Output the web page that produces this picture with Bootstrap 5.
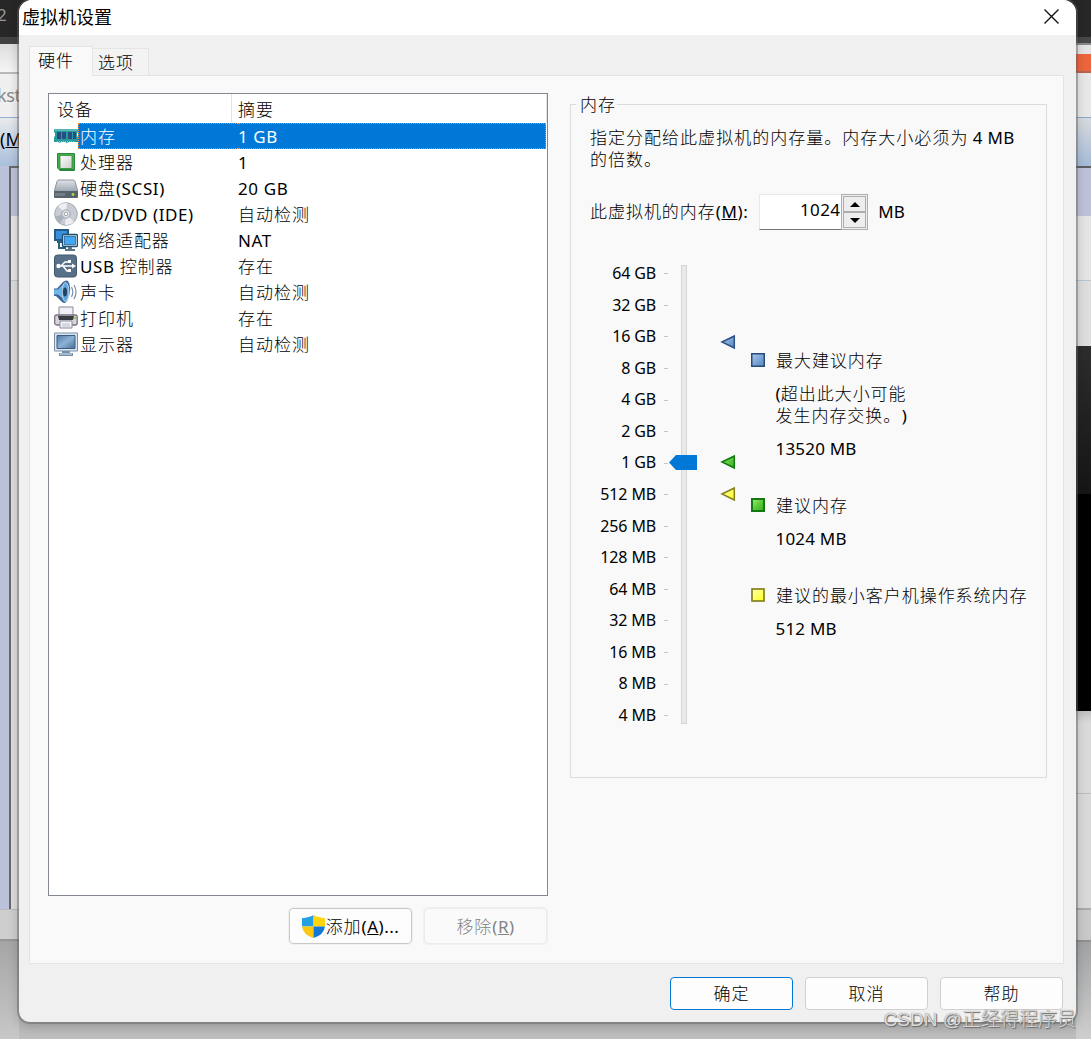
<!DOCTYPE html>
<html lang="zh-CN">
<head>
<meta charset="utf-8">
<title>虚拟机设置</title>
<link rel="stylesheet" href="https://cdn.jsdelivr.net/npm/bootstrap@5.3.0/dist/css/bootstrap.min.css">
<style>
body{width:1091px;height:1039px;overflow:hidden;background:#bdbdbd;color:#000;font:17px/22px "Noto Sans","Noto Sans CJK SC",sans-serif}
.desk{width:1091px;height:1039px}
.backdrop{inset:0;background:linear-gradient(#262626 0 37px,#444 37px 44px,#bbb 44px 940px,#a9aaac 1000px,#bebebe)}
.edge-l{width:19px}.edge-r{width:15px}
.edge-l div,.edge-r div{flex:none;white-space:nowrap;overflow:hidden}
.dlg{left:19px;top:0;width:1057px;height:1022px;background:#f0f0f0;border-radius:13px 13px 11px 11px;box-shadow:0 0 0 2px rgba(100,100,100,.45),0 3px 12px rgba(0,0,0,.22);overflow:hidden}
.dlg-title{height:35px;background:#fff;font:18px/30px "Noto Sans CJK SC",sans-serif;padding:0 17px 3px 3px}
.zh{letter-spacing:.96px;font-weight:300}
.tabs{height:41px;padding:11px 0 0 10px;position:relative;z-index:1}
.tab-a{width:64px;height:30px;background:#f9f9f9;border:1px solid #e4e4e4;border-bottom:0;padding:3px 0 0 8px}
.tab-b{width:56px;height:28px;margin-top:2px;border:1px solid #e4e4e4;border-left:0;background:#f3f3f3;padding:3px 0 0 5px}
.pane{margin:-1px 12px 0 10px;height:889px;width:1035px;background:#f9f9f9;border:1px solid #e4e4e4;padding:17px 16px 0 18px}
.devs{width:500px;height:803px;background:#fff;border:1px solid #828790}
.hd{height:29px;line-height:32px}
.hd .c1{width:183px;padding-left:8px;border-right:1px solid #e4e4e4}
.hd .c2{padding-left:6px;flex:1;border-right:1px solid #e4e4e4}
.dev{height:26px;line-height:28px;padding-left:5px;padding-right:1px}
.dev svg{width:24px;height:24px;flex:none;margin-top:1px}
.dev .nm{width:160px;padding-left:2px;white-space:nowrap;height:26px}
.dev .sm{flex:1;height:26px}
.dev .lt{letter-spacing:.6px}
.dev.sel .nm,.dev.sel .sm{background:#0078d7;color:#fff;border-top:1px dotted #ff8728;border-bottom:1px dotted #ff8728;line-height:26px}
.dev.sel .nm{border-left:1px dotted #ff8728;padding-left:1px}
.dev.sel .sm{border-right:1px dotted #ff8728}
.wbtn{height:36px;width:123px;border:1px solid #c8c8c8;border-radius:4px;background:#fdfdfd;outline:1px solid #f0f0f0;padding:1px 0 0;color:#000;font-size:17px;line-height:22px}
.wbtn.off{color:#838383;border-color:#ebebeb;background:#fafafa}
.wbtn .lt{letter-spacing:.5px}
.foot{padding:13px 13px 0 0;gap:12px}
.foot .wbtn{height:33px;outline:0;border-color:#d0d0d0;padding:0}
.foot .wbtn.go{border-color:#0078d4}
.grp{width:477px;height:674px;margin-top:11px;border:1px solid #dcdcdc;padding:22px 10px 0 19px}
.grp-t{left:5px;top:-11px;background:#f9f9f9;padding:0 1px 0 4px}
.spin{width:109px;height:36px;margin-left:11px;margin-right:10px;background:#fff;border:1px solid #e8e8e8;border-bottom-color:#767676}
.spin .val{flex:1;text-align:right;padding-right:2px;line-height:29px;letter-spacing:.35px}
.spin .ud{width:27px;background:#f0f0f0;border:1px solid #adadad;margin:-1px;padding:1px}
.ud div{flex:1;border:1px solid #adadad;background:#ededed}
.scale{width:78px;height:474px;margin-top:28px}
.scale>div{height:31.57px;line-height:31.57px;white-space:nowrap;font-size:16px;letter-spacing:-.15px}
.scale .tk{width:4px;height:1px;background:#c4c4c4;margin-left:8px}
.rail{width:6px;height:459px;margin:35px 0 0 13px;border:1px solid #d6d6d6;background:#e7eaea}
.leg{margin:96px 0 0 64px;white-space:nowrap;letter-spacing:.2px}
.leg svg{width:14px;height:14px;margin:-2px 11px 0 0}
.leg .ind{padding-left:24.5px}
.mk{position:absolute;overflow:visible}
.wm{right:15px;bottom:6px;font:300 19px/26px "Liberation Sans","Noto Sans CJK SC",sans-serif;color:#dcdcdc;text-shadow:1px 1px 1px #666,0 0 1px #777;white-space:nowrap}
</style>
</head>
<body>
<svg width="0" height="0" class="position-absolute"><defs>
<linearGradient id="gb" x2="1" y2="1"><stop stop-color="#a9c7ea"/><stop offset="1" stop-color="#5686bf"/></linearGradient>
<linearGradient id="gg" x2="1" y2="1"><stop stop-color="#a0f07c"/><stop offset=".5" stop-color="#5bcb3a"/><stop offset="1" stop-color="#37b01e"/></linearGradient>
<linearGradient id="gy" x2="1" y2="1"><stop stop-color="#ffffb4"/><stop offset="1" stop-color="#ffff1c"/></linearGradient>
<linearGradient id="gs" x2="0" y2="1"><stop stop-color="#dfe3e8"/><stop offset="1" stop-color="#99a3ae"/></linearGradient>
<linearGradient id="gm" x2="1" y2="1"><stop stop-color="#4e7aa8"/><stop offset=".5" stop-color="#8db2d5"/><stop offset="1" stop-color="#486d96"/></linearGradient>
<linearGradient id="gc" x2="1" y2="1"><stop stop-color="#fff"/><stop offset="1" stop-color="#c9cdc9"/></linearGradient>
</defs></svg>
<main class="desk position-relative overflow-hidden">
 <div class="backdrop position-absolute d-flex justify-content-between">
  <div class="edge-l d-flex flex-column">
   <div style="height:37px;background:#272727;color:#999;line-height:29px;text-indent:-3px">2</div>
   <div style="height:7px;background:#424242"></div>
   <div style="height:30px;background:linear-gradient(#ddd,#f5f5f5);border-bottom:2px solid #b9b9b9"></div>
   <div style="height:43px;background:#f0f0f0;color:#888;font-size:18px;line-height:43px;text-indent:-3px;letter-spacing:-.4px">kst</div>
   <div style="height:49px;background:linear-gradient(#e8eaed,#a9bfdb);border-top:1px solid #93b0d3;line-height:43px;font-size:18px">(<u>M</u></div>
   <div class="d-flex" style="height:743px">
    <div style="width:9px;background:#bcc2da"></div>
    <div class="flex-grow-1" style="border-left:2px solid #696969;border-top:2px solid #696969;background:linear-gradient(#bcc2d8 48px,#e6e6e6 48px 112px,#b6cadb 112px 113px,#ddd 113px)"></div>
   </div>
   <div style="height:32px;background:#cecece;border-bottom:2px solid #969696;border-top:1px solid #bbb"></div>
   <div class="flex-grow-1" style="background:linear-gradient(#a5a5a5,#c8c8c8)"></div>
  </div>
  <div class="edge-r d-flex flex-column">
   <div style="height:37px;background:#272727"></div>
   <div style="height:8px;background:#484848;border-bottom:2px solid #888"></div>
   <div style="height:9px;background:#e4e4e4"></div>
   <div style="height:19px;background:#ed653d;border-bottom:2px solid #b5664d"></div>
   <div style="height:44px;background:#e8e8e8"></div>
   <div style="height:49px;background:linear-gradient(#d8dadd,#a4bbd8);border-top:1px solid #89a8cd"></div>
   <div style="height:50px;background:#bdc2d8;border-top:2px solid #5e6064"></div>
   <div style="height:65px;background:#e4e4e4;border-bottom:1px solid #b1c7d8"></div>
   <div style="height:65px;background:#dedede"></div>
   <div style="height:148px;background:linear-gradient(#2d2d2d,#161616)"></div>
   <div style="height:217px;background:#000"></div>
   <div style="height:82px;background:linear-gradient(#bfbfbf,#dadada 12px);"></div>
   <div style="height:116px;background:#d9d9d9;border-top:1px solid #bcbcbc;border-bottom:1px solid #aaa"></div>
   <div style="height:33px;background:#c9c9c9;border-bottom:2px solid #8f8f8f;border-top:1px solid #aaa"></div>
   <div class="flex-grow-1" style="background:linear-gradient(#a0a2a4,#cfcfcf)"></div>
  </div>
 </div>

 <section class="dlg position-absolute">
  <header class="dlg-title d-flex justify-content-between align-items-center"><span>虚拟机设置</span>
   <svg width="15" height="15" viewBox="0 0 15 15" stroke="#111" stroke-width="1.4"><path d="M.5.5l14 14M14.500.5l-14 14"/></svg></header>
  <nav class="tabs d-flex align-items-start"><div class="tab-a zh">硬件</div><div class="tab-b zh">选项</div></nav>
  <div class="pane d-flex justify-content-between align-items-start">
   <div>
    <div class="devs">
     <div class="hd d-flex"><div class="c1 zh">设备</div><div class="c2 zh">摘要</div></div>
     <div class="dev sel d-flex"><svg viewBox="0 0 24 24"><path d="M0 5h24v3l-1 1v3l1 1v5h-9l-2 1-2-1H7l-1 1-2-1H0v-5l1-1V9L0 8z" fill="#2b9a9d"/><path d="M0 6h24" stroke="#57b9b6" stroke-width="2"/><path d="M3 8h4v7H3zM8 8h4v7H8zM14 8h4v7h-4zM19 8h3v7h-3z" fill="#254f83"/><path d="M3 17.500h17" stroke="#8cc9b8" stroke-dasharray="1 1"/></svg><div class="nm zh">内存</div><div class="sm lt">1 GB</div></div>
     <div class="dev d-flex"><svg viewBox="0 0 24 24"><rect x="3" y="3" width="18" height="18" rx="1" fill="#27873a"/><path d="M4 4h16v15H4z" fill="#45ad4e"/><rect x="6" y="5.500" width="12" height="13" rx="1" fill="url(#gc)" stroke="#2f8a3a" stroke-width=".8"/><path d="M3 21v-3l3 3" fill="#fff"/></svg><div class="nm zh">处理器</div><div class="sm">1</div></div>
     <div class="dev d-flex"><svg viewBox="0 0 24 24"><path d="M5 4h14q1.500 0 2 1.500L24 16H0L3 5.500Q3.500 4 5 4z" fill="url(#gs)" stroke="#8b939c"/><path d="M0 15h24v6q0 1-1 1H1q-1 0-1-1z" fill="#59636d"/><path d="M2 17v3M4 17v3M6 17v3M8 17v3M10 17v3" stroke="#8f99a3"/><circle cx="19" cy="18.500" r="1.400" fill="#a8dc3c"/></svg><div class="nm lt"><span class="zh">硬盘</span>(SCSI)</div><div class="sm lt">20 GB</div></div>
     <div class="dev d-flex"><svg viewBox="0 0 24 24"><circle cx="12" cy="12" r="11.300" fill="#c9cdd3" stroke="#a3abb4"/><path d="M12 12L4 4A11 11 0 0 1 13 1zM12 12l8 8a11 11 0 0 1-9 3z" fill="#eceef1"/><path d="M12 12L1 14.500a11 11 0 0 0 5 7z" fill="#aab2bb"/><circle cx="12" cy="12" r="4.200" fill="#dce0e4" stroke="#9ba5b0"/><circle cx="12" cy="12" r="1.700" fill="#fff" stroke="#a1a8b0"/></svg><div class="nm lt">CD/DVD (IDE)</div><div class="sm zh">自动检测</div></div>
     <div class="dev d-flex"><svg viewBox="0 0 24 24"><path d="M1 2h13v10H1z" fill="#398fd9" stroke="#265b85" stroke-width="2"/><path d="M5 12v8h7M3 14h5" fill="none" stroke="#2c6178" stroke-width="2"/><rect x="8.500" y="6.500" width="15" height="12" rx="1" fill="#c9dce7" stroke="#1e4e72" stroke-width="1.300"/><rect x="10.500" y="8.500" width="11" height="8" fill="#43a8f3" stroke="#2b6a9c" stroke-width=".8"/><path d="M14 19h4v2h3v2H11v-2h3z" fill="#5c7486"/></svg><div class="nm zh">网络适配器</div><div class="sm lt">NAT</div></div>
     <div class="dev d-flex"><svg viewBox="0 0 24 24"><rect x=".5" y="1" width="22" height="22" rx="3" fill="#587189" stroke="#405970"/><path d="M4 12h15M7 12l4-4h4M9 12l4 5h3" fill="none" stroke="#fff" stroke-width="1.500"/><circle cx="4.500" cy="12" r="2.200" fill="#fff"/><path d="M18 9.500l4 2.500-4 2.500zM14 6h3v3h-3zM14 15h3v3h-3z" fill="#fff"/></svg><div class="nm lt">USB <span class="zh">控制器</span></div><div class="sm zh">存在</div></div>
     <div class="dev d-flex"><svg viewBox="0 0 24 24"><path d="M0 8.500h3l6-6.500q3-2.500 5-1 3.500 5 1.500 13-1.500 7-4.500 9-2 .5-4-2l-5-5H0z" fill="#3a6796"/><path d="M0 9.500h4l5-5q-3 7 0 14l-5-4H0z" fill="#70b8ec"/><ellipse cx="11.500" cy="12" rx="3.400" ry="9.500" fill="#5ba9e0" stroke="#c4d8e8"/><ellipse cx="11" cy="12" rx="2" ry="4.500" fill="#1c4266"/><path d="M17.500 7q2.500 5 0 10M20 5q4 7 0 14" fill="none" stroke="#7391b5" stroke-width="1.200"/></svg><div class="nm zh">声卡</div><div class="sm zh">自动检测</div></div>
     <div class="dev d-flex"><svg viewBox="0 0 24 24"><path d="M5 1h14v9H5z" fill="#eef0f5" stroke="#8d8897"/><rect x=".7" y="9" width="22.500" height="10" rx="2" fill="#d8d5df" stroke="#78717f" stroke-width="1.300"/><path d="M4 10h16l-1 4H5z" fill="#3a3a42"/><path d="M6 15h12v7H6z" fill="#f6f7fa" stroke="#8d8897"/><path d="M8 18h8M8 20h8" stroke="#b6bac5"/><path d="M20 11h2v2h-2z" fill="#7dd04a"/></svg><div class="nm zh">打印机</div><div class="sm zh">存在</div></div>
     <div class="dev d-flex"><svg viewBox="0 0 24 24"><path d="M.5 1h23v18H.5z" fill="#dbe5ef" stroke="#7990aa"/><path d="M3 3.500h18v13H3z" fill="url(#gm)" stroke="#3c5b80"/><path d="M8 19h8v2h3v3H5v-3h3z" fill="#7590ac"/><path d="M6 22h12" stroke="#dbe5ef"/></svg><div class="nm zh">显示器</div><div class="sm zh">自动检测</div></div>
    </div>
    <div class="d-flex justify-content-end" style="gap:12px;margin-top:12px;padding-right:1px">
     <button class="btn wbtn d-flex align-items-center justify-content-center"><svg width="23" height="23" viewBox="0 0 22 22"><path d="M11 0Q7 2.500 0 3v8h11z" fill="#239fe4"/><path d="M11 0q4 2.500 11 3v8H11z" fill="#ffd40a"/><path d="M0 11q1 8 11 11V11z" fill="#fac711"/><path d="M22 11q-1 8-11 11V11z" fill="#1478d4"/></svg><span class="lt" style="margin-left:1px"><span class="zh">添加</span>(<u>A</u>)...</span></button>
     <button class="btn wbtn off"><span class="lt"><span class="zh">移除</span>(<u>R</u>)</span></button>
    </div>
   </div>
   <div class="grp position-relative">
    <div class="grp-t position-absolute zh">内存</div>
    <div class="text-nowrap"><span class="zh" style="letter-spacing:1.02px">指定分配给此虚拟机的内存量。内存大小必须为</span> <span style="letter-spacing:.3px">4 MB</span><br><span class="zh">的倍数。</span></div>
    <div class="d-flex align-items-center text-nowrap" style="margin-top:23px"><span style="letter-spacing:.6px"><span class="zh">此虚拟机的内存</span>(<u>M</u>):</span>
     <div class="spin d-flex"><span class="val">1024</span><div class="ud d-flex flex-column"><div class="d-flex align-items-center justify-content-center"><svg width="10" height="5"><path d="M0 5l5-5 5 5z"/></svg></div><div class="d-flex align-items-center justify-content-center"><svg width="10" height="5"><path d="M0 0l5 5 5-5z"/></svg></div></div></div>MB</div>
    <div class="d-flex align-items-start">
     <div class="scale" id="scale"></div>
     <div class="rail"></div>
     <div class="leg">
      <div class="d-flex align-items-center" style="margin-top:24px"><svg><rect x=".75" y=".75" width="12.500" height="12.500" fill="url(#gb)" stroke="#294b7b" stroke-width="1.500"/></svg><span class="zh">最大建议内存</span></div>
      <div class="ind" style="margin-top:11px">(<span class="zh">超出此大小可能<br>发生内存交换。<span style="margin-left:9px"></span></span>)</div>
      <div class="ind" style="margin-top:11px">13520 MB</div>
      <div class="d-flex align-items-center" style="margin-top:35px"><svg><rect x="1" y="1" width="12" height="12" fill="url(#gg)" stroke="#137811" stroke-width="2"/></svg><span class="zh">建议内存</span></div>
      <div class="ind" style="margin-top:11px">1024 MB</div>
      <div class="d-flex align-items-center" style="margin-top:35px"><svg><rect x="1" y="1" width="12" height="12" fill="url(#gy)" stroke="#85801c" stroke-width="1.700"/></svg><span class="zh">建议的最小客户机操作系统内存</span></div>
      <div class="ind" style="margin-top:11px">512 MB</div>
     </div>
    </div>
    <svg class="mk" style="left:98px;top:350px" width="28" height="15"><path d="M0 7.500L7 0h21v15H7z" fill="#0078d7"/></svg>
    <svg class="mk" style="left:150px;top:230px" width="14" height="14"><path d="M1 7L13.300 1v12z" fill="url(#gb)" stroke="#2c5286" stroke-width="1.500"/></svg>
    <svg class="mk" style="left:150px;top:350px" width="14" height="14"><path d="M1 7L13.300 1v12z" fill="url(#gg)" stroke="#137811" stroke-width="1.500"/></svg>
    <svg class="mk" style="left:150px;top:382px" width="14" height="14"><path d="M1 7L13.300 1v12z" fill="url(#gy)" stroke="#85801c" stroke-width="1.500"/></svg>
   </div>
  </div>
  <footer class="foot d-flex justify-content-end"><button class="btn wbtn go zh">确定</button><button class="btn wbtn zh">取消</button><button class="btn wbtn zh">帮助</button></footer>
 </section>
 <div class="wm position-absolute">CSDN @正经得程序员</div>
</main>
<script>
document.getElementById('scale').innerHTML=['64 GB','32 GB','16 GB','8 GB','4 GB','2 GB','1 GB','512 MB','256 MB','128 MB','64 MB','32 MB','16 MB','8 MB','4 MB'].map(t=>'<div class="d-flex align-items-center justify-content-end"><span>'+t+'</span><i class="tk"></i></div>').join('');
</script>
<script src="https://cdn.jsdelivr.net/npm/bootstrap@5.3.0/dist/js/bootstrap.bundle.min.js"></script>
</body>
</html>
